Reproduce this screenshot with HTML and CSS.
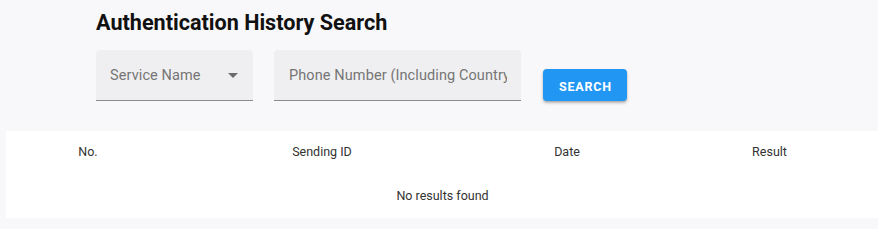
FILE: index.html
```html
<!DOCTYPE html>
<html>
<head>
<meta charset="utf-8">
<link rel="stylesheet" href="styles.css">
</head>
<body>
<div class="page">
  <div class="search-area">
    <h1 class="title">Authentication History Search</h1>
    <div class="form-row">
      <div class="field field-select">
        <span class="label">Service Name</span>
        <svg class="caret" width="10" height="5" viewBox="0 0 10 5"><path d="M0 0 L10 0 L5 5 Z" fill="#6b6b6b"/></svg>
      </div>
      <div class="field field-phone">
        <span class="label">Phone Number (Including Country Code)</span>
      </div>
      <button class="btn-search">SEARCH</button>
    </div>
  </div>
  <div class="table-card">
    <table class="results">
      <thead>
        <tr>
          <th class="c1">No.</th>
          <th class="c2">Sending ID</th>
          <th class="c3">Date</th>
          <th class="c4">Result</th>
        </tr>
      </thead>
      <tbody>
        <tr><td colspan="4" class="empty">No results found</td></tr>
      </tbody>
    </table>
  </div>
</div>
</body>
</html>
```
FILE: styles.css
```css
html, body {
  margin: 0;
  padding: 0;
  background: #f8f8fa;
  font-family: Roboto, "Liberation Sans", Arial, sans-serif;
}
.page {
  width: 878px;
  height: 229px;
  overflow: hidden;
}
.search-area {
  padding: 0 0 0 96px;
}
.title {
  margin: 0;
  padding-top: 9px;
  font-size: 21.6px;
  line-height: 28px;
  font-weight: 700;
  color: #111;
}
.form-row {
  display: flex;
  align-items: flex-end;
  margin-top: 13px;
}
.field {
  height: 50px;
  background: #efeff1;
  border-radius: 4px 4px 0 0;
  border-bottom: 1px solid #8c8c8c;
  display: flex;
  align-items: center;
  box-sizing: content-box;
  overflow: hidden;
  white-space: nowrap;
}
.label {
  font-size: 14.5px;
  color: #757575;
  letter-spacing: 0.1px;
}
.field-select {
  width: 157px;
  margin-right: 21px;
}
.field-select .label {
  margin-left: 14px;
  margin-right: 27px;
}
.caret {
  display: block;
}
.field-phone {
  width: 247px;
}
.field-phone .label {
  margin-left: 15px;
  width: 218px;
  overflow: hidden;
  text-overflow: clip;
}
.btn-search {
  margin-left: 22px;
  width: 84px;
  height: 32px;
  border: none;
  border-radius: 4px;
  background: #2196f3;
  color: #fff;
  font-family: Roboto, "Liberation Sans", Arial, sans-serif;
  font-weight: 700;
  font-size: 12.5px;
  letter-spacing: 0.8px;
  box-shadow: 0 2px 3px rgba(0,0,0,0.25), 0 1px 2px rgba(0,0,0,0.1);
  padding: 2px 0 0 1px;
}
.table-card {
  margin: 30px 0 0 6px;
  background: #fff;
  height: 87px;
  width: 873px;
}
.results {
  border-collapse: collapse;
  width: 873px;
  table-layout: fixed;
}
.results th {
  font-weight: 400;
  font-size: 12.5px;
  color: #333;
  height: 41px;
  padding: 0;
  text-align: center;
}
.c1 { width: 164px; }
.c2 { width: 304px; }
.c3 { width: 186px; }
.c4 { width: 219px; }
.empty {
  text-align: center;
  font-size: 12.5px;
  color: #333;
  height: 46px;
  padding: 0;
}
```
